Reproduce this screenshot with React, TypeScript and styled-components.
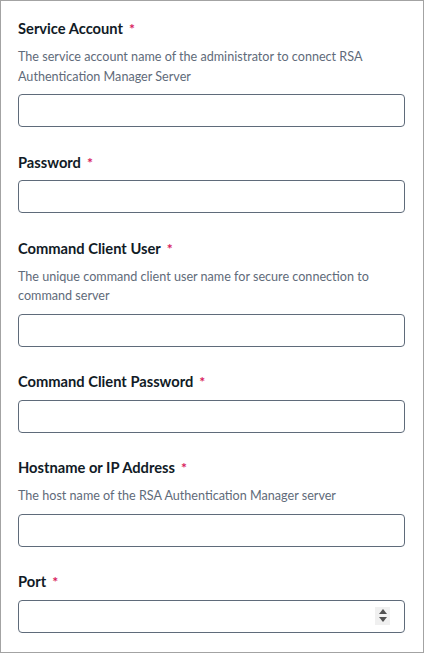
import React from 'react';
import styled, { createGlobalStyle } from 'styled-components';

const GlobalStyle = createGlobalStyle`
  html, body {
    margin: 0;
    padding: 0;
    background: #ffffff;
  }
  * {
    box-sizing: border-box;
  }
`;

const Frame = styled.div`
  width: 424px;
  height: 653px;
  border: 1px solid #a3a3a3;
  background: #ffffff;
  padding: 17px 18px 0 17px;
  font-family: Lato, 'Noto Sans', sans-serif;
  overflow: hidden;
`;

const Field = styled.div`
  display: flex;
  flex-direction: column;
  margin-bottom: 24.5px;
`;

const Label = styled.label`
  font-size: 14.7px;
  font-weight: 700;
  color: #111b26;
  line-height: 20px;
  margin-bottom: 7.5px;
`;

const Star = styled.span`
  color: #d81b5c;
  font-weight: 700;
  font-size: 14px;
  margin-left: 6px;
`;

const Hint = styled.div`
  font-size: 12.6px;
  color: #5f6b7a;
  line-height: 19.5px;
  margin-top: 0.5px;
  margin-bottom: 8px;
`;

const InputWrap = styled.div`
  position: relative;
`;

const Input = styled.input`
  width: 100%;
  height: 33px;
  border: 1px solid #5f6b7a;
  border-radius: 4px;
  padding: 0 10px;
  font-family: inherit;
  font-size: 14px;
  outline: none;
  background: #ffffff;
`;

const Spinner = styled.div`
  position: absolute;
  right: 15px;
  top: 7px;
  width: 15px;
  height: 18px;
  background: #f0f0f0;
  display: flex;
  flex-direction: column;
  align-items: center;
  justify-content: center;
  gap: 3px;
`;

const Arrow = styled.span<{ $down?: boolean }>`
  width: 0;
  height: 0;
  border-left: 4px solid transparent;
  border-right: 4px solid transparent;
  ${p => (p.$down ? 'border-top: 5px solid #505050;' : 'border-bottom: 5px solid #505050;')}
`;

type FieldDef = {
  label: string;
  hint?: string;
  type?: string;
};

const fields: FieldDef[] = [
  {
    label: 'Service Account',
    hint: 'The service account name of the administrator to connect RSA Authentication Manager Server',
  },
  { label: 'Password', type: 'password' },
  {
    label: 'Command Client User',
    hint: 'The unique command client user name for secure connection to command server',
  },
  { label: 'Command Client Password', type: 'password' },
  {
    label: 'Hostname or IP Address',
    hint: 'The host name of the RSA Authentication Manager server',
  },
  { label: 'Port', type: 'number' },
];

const App = () => {
  return (
    <>
      <GlobalStyle />
      <Frame>
        {fields.map((field, index) => (
          <Field key={index}>
            <Label>
              {field.label}
              <Star>*</Star>
            </Label>
            {field.hint && <Hint>{field.hint}</Hint>}
            <InputWrap>
              <Input type={field.type === 'password' ? 'password' : 'text'} />
              {field.type === 'number' && (
                <Spinner>
                  <Arrow />
                  <Arrow $down />
                </Spinner>
              )}
            </InputWrap>
          </Field>
        ))}
      </Frame>
    </>
  );
};

export default App;
